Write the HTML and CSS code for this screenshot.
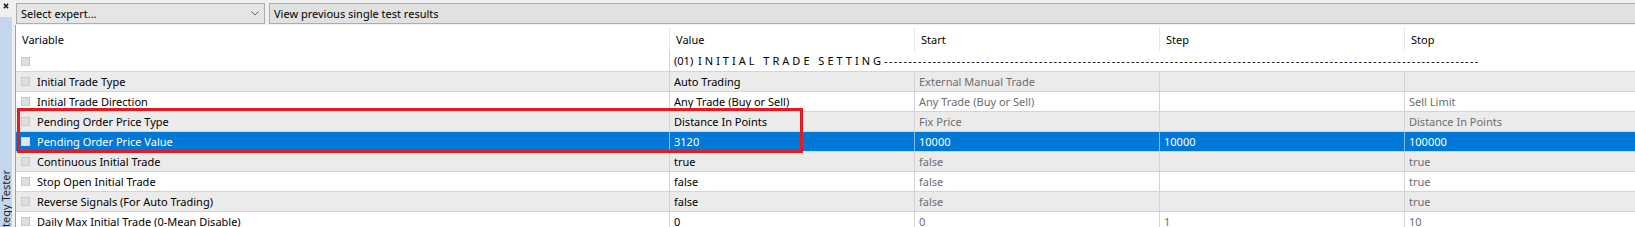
FILE: index.html
```html
<!DOCTYPE html>
<html>
<head>
  <meta charset="UTF-8">
  <title>Strategy Tester - Inputs</title>
  <link rel="stylesheet" href="styles.css">
</head>
<body>
  <div class="window">
    <div class="side">
      <div class="close">
        <svg width="6" height="6" viewBox="0 0 6 6"><path d="M0.8 0.8 L5.2 5.2 M5.2 0.8 L0.8 5.2" stroke="#111" stroke-width="1.4"/></svg>
      </div>
      <div class="tab"><span class="tab-label">Strategy Tester</span></div>
    </div>

    <div class="main">
      <div class="toolbar">
        <div class="combo">
          <span>Select expert...</span>
          <svg width="8" height="5" viewBox="0 0 8 5"><path d="M0.5 0.5 L4 4 L7.5 0.5" fill="none" stroke="#606060" stroke-width="1"/></svg>
        </div>
        <button class="btn">View previous single test results</button>
      </div>

      <div class="grid">
        <div class="row head">
          <div class="cell">Variable</div>
          <div class="cell">Value</div>
          <div class="cell">Start</div>
          <div class="cell">Step</div>
          <div class="cell">Stop</div>
        </div>

        <div class="row group">
          <div class="cell first"><span class="check"></span></div>
          <div class="cell title">(01) <span class="caps">INITIAL TRADE SETTING</span><span class="dashes">---------------------------------------------------------------------------------------------------------------------------</span></div>
        </div>

        <div class="row alt">
          <div class="cell first"><span class="check"></span>Initial Trade Type</div>
          <div class="cell">Auto Trading</div>
          <div class="cell dim">External Manual Trade</div>
          <div class="cell dim"></div>
          <div class="cell dim"></div>
        </div>
        <div class="row">
          <div class="cell first"><span class="check"></span>Initial Trade Direction</div>
          <div class="cell">Any Trade (Buy or Sell)</div>
          <div class="cell dim">Any Trade (Buy or Sell)</div>
          <div class="cell dim"></div>
          <div class="cell dim">Sell Limit</div>
        </div>
        <div class="row alt">
          <div class="cell first"><span class="check"></span>Pending Order Price Type</div>
          <div class="cell">Distance In Points</div>
          <div class="cell dim">Fix Price</div>
          <div class="cell dim"></div>
          <div class="cell dim">Distance In Points</div>
        </div>
        <div class="row sel">
          <div class="cell first"><span class="check"></span>Pending Order Price Value</div>
          <div class="cell">3120</div>
          <div class="cell dim">10000</div>
          <div class="cell dim">10000</div>
          <div class="cell dim">100000</div>
        </div>
        <div class="row alt">
          <div class="cell first"><span class="check"></span>Continuous Initial Trade</div>
          <div class="cell">true</div>
          <div class="cell dim">false</div>
          <div class="cell dim"></div>
          <div class="cell dim">true</div>
        </div>
        <div class="row">
          <div class="cell first"><span class="check"></span>Stop Open Initial Trade</div>
          <div class="cell">false</div>
          <div class="cell dim">false</div>
          <div class="cell dim"></div>
          <div class="cell dim">true</div>
        </div>
        <div class="row alt">
          <div class="cell first"><span class="check"></span>Reverse Signals (For Auto Trading)</div>
          <div class="cell">false</div>
          <div class="cell dim">false</div>
          <div class="cell dim"></div>
          <div class="cell dim">true</div>
        </div>
        <div class="row">
          <div class="cell first"><span class="check"></span>Daily Max Initial Trade (0-Mean Disable)</div>
          <div class="cell">0</div>
          <div class="cell dim">0</div>
          <div class="cell dim">1</div>
          <div class="cell dim">10</div>
        </div>

        <div class="mark"></div>
      </div>
    </div>
  </div>
</body>
</html>
```

FILE: styles.css
```css
* {
  box-sizing: border-box;
}

body {
  margin: 0;
  height: 227px;
  overflow: hidden;
  background-color: #f0f0f0;
  color: #000;
  font-family: "Noto Sans", "Open Sans", sans-serif;
  font-size: 11px;
}

.window {
  display: flex;
  height: 227px;
}

/* left dock strip */
.side {
  width: 15px;
  flex-shrink: 0;
  display: flex;
  flex-direction: column;
}

.close {
  height: 17px;
  padding: 3px 0 0 3px;
}

.close svg {
  display: block;
}

.tab {
  flex: 1;
  width: 12px;
  background-color: #c3d6ed;
  overflow: hidden;
}

.tab-label {
  display: block;
  margin-top: 153px;
  writing-mode: vertical-rl;
  transform: rotate(180deg);
  white-space: nowrap;
  line-height: 12px;
  color: #1e1e1e;
}

/* main area */
.main {
  flex: 1;
  min-width: 0;
  display: flex;
  flex-direction: column;
}

.toolbar {
  height: 25px;
  padding: 3px 0 1px 1px;
  display: flex;
  gap: 4px;
}

.combo {
  width: 249px;
  display: flex;
  align-items: center;
  justify-content: space-between;
  padding: 0 5px 0 4px;
  border: 1px solid #adadad;
  background-color: #e5e5e5;
}

.btn {
  flex: 1;
  margin: 0;
  padding: 0 0 0 4px;
  text-align: left;
  font: inherit;
  color: #000;
  border: 1px solid #adadad;
  border-right: none;
  background-color: #e1e1e1;
}

.grid {
  flex: 1;
  position: relative;
  overflow: hidden;
  background-color: #fff;
  border-left: 1px solid #a0a0a0;
}

.row {
  display: grid;
  grid-template-columns: 653px 245px 245px 245px 245px;
  height: 20px;
  border-bottom: 1px solid #d4d4d4;
}

.row.alt {
  background-color: #ebebeb;
}

.cell {
  display: flex;
  align-items: center;
  padding-left: 4px;
  border-left: 1px solid #d4d4d4;
  white-space: nowrap;
  overflow: hidden;
}

.cell.first {
  padding-left: 5px;
  border-left: none;
}

.cell.dim {
  color: #6d6d6d;
}

.check {
  width: 9px;
  height: 9px;
  margin-right: 7px;
  flex-shrink: 0;
  background-color: #dedede;
  border: 1px solid #cbcbcb;
}

/* header */
.row.head {
  height: 26px;
  border-bottom: none;
}

.row.head .cell {
  margin-top: 3px;
  padding-left: 6px;
  padding-bottom: 1px;
  border-left-color: #e5e5e5;
}

.row.head .cell:first-child {
  border-left: none;
}

/* group title row */
.row.group {
  height: 21px;
}

.row.group .title {
  display: block;
  grid-column: 2 / 6;
  line-height: 20px;
}

.caps {
  margin-left: 2px;
  letter-spacing: 3px;
}

.dashes {
  letter-spacing: 1.3px;
}

/* selected row */
.row.sel {
  background-color: #0078d7;
  color: #fff;
}

.row.sel .cell {
  border-left-color: #7fbdf0;
}

.row.sel .cell.first {
  border-left: none;
}

.row.sel .cell.dim {
  color: #fff;
}

.row.sel .check {
  background-color: #e6e6e6;
  border-color: #d8d8d8;
}

/* highlight box drawn over the rows */
.mark {
  position: absolute;
  left: 1px;
  top: 83px;
  width: 786px;
  height: 45px;
  border: 3px solid #e31b23;
}
```
